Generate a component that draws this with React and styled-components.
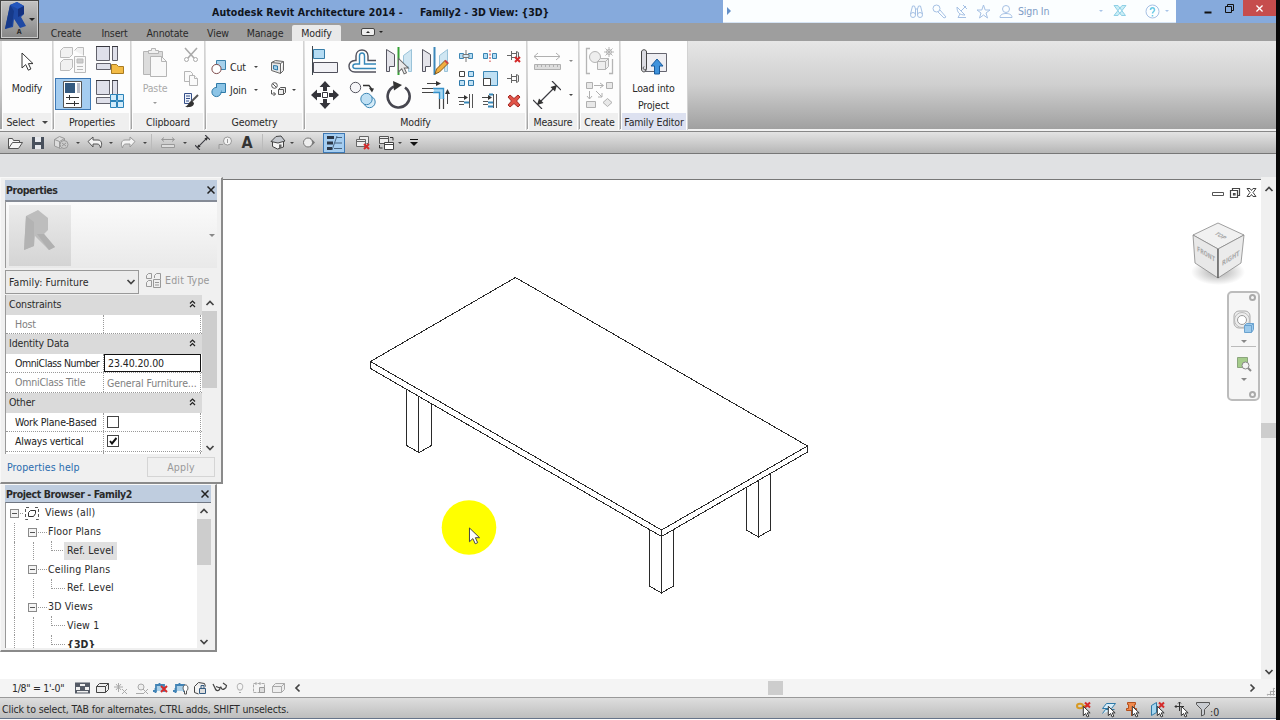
import React from 'react'
import styled, { createGlobalStyle, css } from 'styled-components'

/* ---------- icons ---------- */

const Icon = ({ w = 20, h = 20, children }) => (
    <Svg width={w} height={h} viewBox={`0 0 ${w} ${h}`}>{children}</Svg>
)

const Pointer = ({ x = 0, y = 0, s = 1, fill = '#fff', stroke = '#333' }) => (
    <path
        transform={`translate(${x} ${y}) scale(${s})`}
        d="M.5.5v15l3.7-3.4 2.6 5.6 2.6-1.2-2.5-5.4h4.6z"
        fill={fill}
        stroke={stroke}
        strokeWidth={1 / s}
    />
)

const CrossMark = ({ x, y, s = 8 }) => (
    <path d={`M${x} ${y}l${s} ${s}M${x + s} ${y}l${-s} ${s}`} stroke="#d42a2a" strokeWidth="2" />
)

const RevitLogo = () => (
    <Icon w={24} h={27}>
        <path d="M5 3l7-3 7 4v8l-3 3 5 9-6 2-6-9-1 8-8 2z" fill="#1f49a4" />
        <path d="M5 3L0 27l7-3 2-15z" fill="#173a8a" />
        <path d="M5 3l7-3 7 4-6 3z" fill="#2456bd" />
        <path d="M13 7l6-3v8l-6 3z" fill="#143180" />
    </Icon>
)

const TypeLogo = () => (
    <Icon w={34} h={43}>
        <path d="M4 8L16 2l10 8v12l-4 4 11 13-6 3L13 28l-1 10-10 4z" fill="#bdbdbd" />
        <path d="M4 8L2 42l10-4V14z" fill="#b3b3b3" />
        <path d="M15 26l7 0 11 13-6 3z" fill="#b0b0b0" />
    </Icon>
)

const TypeProps = () => (
    <Icon w={28} h={28}>
        <g fill="#f1f1f1" stroke="#bbb">
            <path d="M1.500 4.500l3-3h9v7l-3 3h-9zM15.500 4.500l3-3h6v8M1.500 16.500l3-3h9v8l-3 3h-9z" />
            <path d="M15.500 10.500h11v16h-11z" fill="#f8f8f8" />
            <path d="M18 13h6v4h-6z" fill="#ccc" />
            <path d="M18 20.500h6M18 23.500h6" />
        </g>
    </Icon>
)

const FamilyTypes = ({ variant }) => (
    <Icon w={30} h={30}>
        <path d="M1.500 1.500h13v14h-13zM17.500 1.500h5v14h-5zM1.500 18.500h14v6h-14z" fill="#dfe0ea" stroke="#62626c" />
        <path d="M1 1.500h14M17 1.500h6" stroke="#38383f" />
        {variant === 'folder' ? (
            <path d="M16.500 19.500h5l2 2h5v7h-12z" fill="#f3bb45" stroke="#a87a20" />
        ) : (
            <path d="M15.500 15.500h6v6h-6zM22.500 15.500h6v6h-6zM15.500 22.500h6v6h-6zM22.500 22.500h6v6h-6z" fill="#d3ecfa" stroke="#2b83b9" />
        )}
    </Icon>
)

const PropertiesSheet = () => (
    <Icon w={22} h={29}>
        <path d="M1.500 1.500h18v26h-18z" fill="#fff" stroke="#555" />
        <path d="M3 3h10v10H3z" fill="#33597f" />
        <path d="M15 3h3v10h-3z" fill="#b9bcc6" />
        <path d="M4 17.500h13M4 23.500h13M7.500 15v5M12.500 21v5" stroke="#333" />
    </Icon>
)

const Paste = () => (
    <Icon w={26} h={30}>
        <g stroke="#b5b5b5">
            <path d="M1.500 3.500h19v23h-19z" fill="#dcdcdc" />
            <path d="M6.500 5.500v-3h3v-2h4v2h3v3z" fill="#f0f0f0" />
            <path d="M8.500 8.500h11l5 5v15h-16z" fill="#f8f8f8" />
            <path d="M19.500 8.500v5h5" fill="none" />
        </g>
    </Icon>
)

const Scissors = () => (
    <Icon w={16} h={16}>
        <g fill="none" stroke="#aaa">
            <path d="M2 1l9 10M14 1L5 11" strokeWidth="1.600" />
            <circle cx="3.500" cy="12.500" r="2" /><circle cx="12.500" cy="12.500" r="2" />
        </g>
    </Icon>
)

const CopyPages = () => (
    <Icon w={16} h={16}>
        <g fill="#fafafa" stroke="#b5b5b5">
            <path d="M1.500 1.500h6l2 2v8h-8z" /><path d="M6.500 5.500h5l3 3v7h-8z" /><path d="M11.500 5.500v3h3" />
        </g>
    </Icon>
)

const MatchType = () => (
    <Icon w={16} h={16}>
        <path d="M1.500 1.500h7v10h-7z" fill="#eef3fa" stroke="#36508a" />
        <path d="M3 4h4M3 6.500h4M3 9h3" stroke="#36508a" />
        <path d="M15 3L8 10" stroke="#555" strokeWidth="2" />
        <path d="M9 9c-3 0-3 4-7 6 4 .5 9 0 9-4z" fill="#333" />
    </Icon>
)

const Cut = () => (
    <Icon w={16} h={16}>
        <path d="M5.500 1.500h9v9h-9z" fill="#a6d1ec" stroke="#3c83ad" />
        <circle cx="5.500" cy="10" r="4.600" fill="#fff" stroke="#7d4a4a" />
    </Icon>
)

const Join = () => (
    <Icon w={16} h={16}>
        <path d="M5.500 1.500h9v9h-9z" fill="#8cc4e6" stroke="#2f7aa8" />
        <circle cx="5.500" cy="10" r="4.600" fill="#8cc4e6" stroke="#2f7aa8" />
        <path d="M6 5h4v5H6z" fill="#8cc4e6" />
    </Icon>
)

const SplitFace = () => (
    <Icon w={15} h={16}>
        <path d="M1.500 3.500l9 1v10l-9-3zM1.500 3.500l4-2 8 1-3 2M13.500 2.500v9l-3 3" fill="#e8e8e8" stroke="#666" />
        <path d="M3.500 6.500l4 .5v4l-4-1z" fill="#a6d1ec" stroke="#2f7aa8" />
    </Icon>
)

const Demolish = () => (
    <Icon w={16} h={15}>
        <g fill="none" stroke="#555">
            <circle cx="4.500" cy="3.500" r="2.800" /><path d="M3 2l3 3M1.500 8v4h4m-2-2l2 2-2 2" />
            <path d="M8.500 7.500l2-2h5v5l-2 2h-5zM8.500 7.500h5v5" fill="#eee" />
        </g>
    </Icon>
)

const Align = () => (
    <Icon w={28} h={29}>
        <path d="M1.500 0v29" stroke="#3f464d" />
        <path d="M2.500 3.500h11v9h-11z" fill="#b5dcf4" stroke="#377da8" />
        <path d="M2.500 16.500h24v10h-24z" fill="#f2f2f6" stroke="#51515c" />
    </Icon>
)

const Offset = () => (
    <Icon w={30} h={26}>
        <g fill="none">
            <path d="M28 12.500h-8V8c0-8-12-8-12 0v4.500H7c-8 0-8 11.500 0 11.500h21" stroke="#51515c" strokeWidth="1.400" />
            <path d="M28 16h-11.500V8c0-4-5-4-5 0v8H7.500c-3.500 0-3.500 4.500 0 4.500h20.500" stroke="#3688b9" strokeWidth="1.400" />
        </g>
    </Icon>
)

const MirrorPick = () => (
    <Icon w={28} h={28}>
        <path d="M1.500 2.500l8 5v12h-5v5h-3z" fill="#e4e4ea" stroke="#555560" />
        <path d="M26.500 2.500l-8 6v11h5v5h3z" fill="#cfe6f2" stroke="#9ac3d9" />
        <path d="M13.500 0v28" stroke="#35a135" strokeWidth="2" />
        <Pointer x={13} y={11} s={0.9} fill="#e9e9e9" stroke="#666" />
    </Icon>
)

const MirrorDraw = () => (
    <Icon w={28} h={28}>
        <path d="M1.500 2.500l8 5v12h-5v5h-3z" fill="#e4e4ea" stroke="#555560" />
        <path d="M26.500 2.500l-8 6v11h5v5h3z" fill="#cfe6f2" stroke="#9ac3d9" />
        <path d="M13.500 0v28" stroke="#3d88bb" strokeWidth="2" />
        <path d="M14 27l1.500-5L24 13.500l3 3-8.500 8.500z" fill="#f2ae3e" stroke="#80591c" />
        <path d="M24 13.500l3 3" stroke="#c44" strokeWidth="2" />
    </Icon>
)

const Move = () => (
    <Icon w={28} h={28}>
        <g fill="#35353b">
            <path d="M14 0l5.500 6H16v4h-4V6H8.500zM14 28l5.500-6H16v-4h-4v4H8.500zM0 14l6-5.500V12h4v4H6v3.500zM28 14l-6-5.500V12h-4v4h4v3.500z" />
        </g>
        <path d="M11.500 11.500h5v5h-5z" fill="#fff" stroke="#35353b" />
    </Icon>
)

const CopyShape = () => (
    <Icon w={28} h={28}>
        <circle cx="6.500" cy="6.500" r="5.200" fill="#f5f5f8" stroke="#55555f" />
        <path d="M14 4.500h6l3 4" fill="none" stroke="#333" strokeWidth="1.300" />
        <path d="M20 7l5 .5-2 4z" fill="#333" />
        <circle cx="20.500" cy="21" r="5.700" fill="#d5ecf9" stroke="#3c86b4" />
        <circle cx="17.500" cy="18" r="5.700" fill="#bfe0f4" stroke="#3c86b4" />
    </Icon>
)

const Rotate = () => (
    <Icon w={27} h={28}>
        <path d="M9 5.500a11 11 0 1 0 11 1" fill="none" stroke="#46464f" strokeWidth="2.600" />
        <path d="M8 0l9 4-8 5.500z" fill="#333" />
    </Icon>
)

const Trim = () => (
    <Icon w={29} h={28}>
        <path d="M1 7.500h12M1 11.500h12M6 2.500h13M18.500 17v11M22.500 17v11" stroke="#444" strokeWidth="1.200" />
        <path d="M15 0l5 2.500L15 5zM24 13l2.500-5 2.500 5z" fill="#333" />
        <path d="M26.500 12v11" stroke="#444" />
        <path d="M13 9.500h7.500V18" stroke="#a7d7f2" strokeWidth="3" fill="none" />
        <path d="M12 7.500h10.500V18M12 11.500h6.500V18" stroke="#3691c9" strokeWidth="1.400" fill="none" />
    </Icon>
)

const SplitElement = ({ gap }) => (
    <Icon w={16} h={14}>
        <path d="M1.500 4.500h4v5h-4zM10.500 4.500h4v5h-4z" fill="#b5dcf4" stroke="#3c86b4" />
        {gap ? (
            <path d="M8 1v12" stroke="#c33" strokeDasharray="2 1.500" />
        ) : (
            <path d="M5 5.500h6v3H5zM8 1v4M8 9v4" fill="#d5ecf9" stroke="#777" />
        )}
    </Icon>
)

const ArrayTool = () => (
    <Icon w={17} h={17}>
        <path d="M1.500 1.500h5v5h-5z" fill="#fff" stroke="#444" />
        <path d="M10.500 1.500h5v5h-5zM1.500 10.500h5v5h-5zM10.500 10.500h5v5h-5z" fill="#c2e2f5" stroke="#2e7aab" />
    </Icon>
)

const Scale = () => (
    <Icon w={17} h={17}>
        <path d="M1.500 1.500h14v14h-14z" fill="#bfe0f4" stroke="#3c86b4" />
        <path d="M1.500 8.500h7v7h-7z" fill="#fff" stroke="#444" />
    </Icon>
)

const Pin = ({ off }) => (
    <Icon w={16} h={16}>
        <path d="M1 7.500h4M5.500 3v9M6 5.500h4M6 9.500h4M10.500 3.500l2 1v6l-2 1z" stroke="#666" fill="#eee" />
        {off && <CrossMark x={9} y={9} s={5} />}
    </Icon>
)

const ExtendSingle = ({ multi }) => (
    <Icon w={16} h={16}>
        <path d="M14.500 1v14M11.500 1v14" stroke="#555" />
        <path d="M0 4.500h7" stroke="#444" /><path d="M6 2l4 2.500L6 7z" fill="#333" />
        <path d="M6 9.500h5" stroke="#3688b9" strokeWidth="2" />
        {multi && <path d="M6 13.500h5M7 1.500h4" stroke="#3688b9" strokeWidth="2" />}
        <path d="M1 8.500h5M1 11.500h5" stroke="#555" />
    </Icon>
)

const Delete = () => (
    <Icon w={14} h={14}>
        <path d="M1 3l2-2 4 3.500L11 1l2 2-3.500 4 3.500 4-2 2-4-3.500L3 13l-2-2 3.500-4z" fill="#e05347" stroke="#a52a24" />
    </Icon>
)

const Measure = ({ small }) => (
    <Icon w={small ? 16 : 28} h={small ? 14 : 18}>
        {small ? (
            <g stroke="#999" fill="#ddd">
                <path d="M2 3.500h12M4 1.500L1.500 3.500 4 5.500M12 1.500l2.500 2L12 5.500" fill="none" /><path d="M1.500 8.500h13v3h-13z" />
            </g>
        ) : (
            <g stroke="#b0b0b0">
                <path d="M1 4.500h26M5 1L1 4.500 5 8M23 1l4 3.500L23 8" fill="none" />
                <path d="M1.500 12.500h26v5h-26z" fill="#ddd" />
                <path d="M4.500 13v2M8.500 13v2M12.500 13v2M16.500 13v2M20.500 13v2M24.500 13v2" />
            </g>
        )}
    </Icon>
)

const Dimension = ({ s = 28 }) => (
    <Svg width={s} height={s} viewBox="0 0 28 28">
        <path d="M5 23L23 5M0 19l9 9M19 0l9 9" stroke="#3b3b42" strokeWidth={s < 20 ? 2 : 1.2} />
        <path d="M4 24l2-6.500 4.500 4.500zM24 4l-6.500 2 4.500 4.500z" fill="#333" />
    </Svg>
)

const CreateGroup = () => (
    <Icon w={29} h={28}>
        <g stroke="#b5b5b5" fill="none">
            <path d="M5 1.500H1.500v25H5M24 26.500h3.500V12" strokeWidth="1.300" />
            <circle cx="10" cy="10" r="5.500" fill="#eee" />
            <path d="M12.500 14.500l3-3h8v8l-3 3h-8zM12.500 14.500h8v8M20.500 14.500l3-3" fill="#efefef" />
            <circle cx="24" cy="5" r="2.500" /><path d="M24 0v10M19 5h10M20.500 1.500l7 7M27.500 1.500l-7 7" />
        </g>
    </Icon>
)

const CreateSimilar = () => (
    <Icon w={29} h={29}>
        <g stroke="#b0b0b0" fill="#e8e8e8">
            <path d="M1.500 2.500h6v6h-6zM21.500 2.500h6v6h-6zM1.500 21.500h9v6h-9zM22.500 18.500l4.500 4-4.500 4-4.500-4z" />
            <path d="M9 5.500h9M15 3l3.500 2.500L15 8M4.500 11v8M2 16l2.500 3L7 16M11 11l6 6M13 17h4v-4" fill="none" />
        </g>
    </Icon>
)

const LoadProject = () => (
    <Icon w={28} h={26}>
        <path d="M5 4.500h21.500v18H5z" fill="#eeeef2" stroke="#666670" />
        <path d="M1.500 3c0-3 5-3 5 0v16c0 5-5 5-5 1z" fill="#dcdce2" stroke="#444" />
        <path d="M4 17.500c-2 2 0 4 2 3" stroke="#444" fill="none" />
        <path d="M17 10l6 7h-3.500v8h-5v-8H11z" fill="#3f93dc" stroke="#195a9c" />
    </Icon>
)

const OpenFolder = () => (
    <Icon w={17} h={14}><path d="M1.500 12.500v-10h4l1 2h6v2M1.500 12.500l4-6h10l-4 6z" fill="#f5f5f5" stroke="#555" /></Icon>
)
const Save = () => (
    <Icon w={14} h={14}><path d="M1 1h12v12H1z" fill="#48505c" /><path d="M4 1h6v5H4zM4 9h6v4H4z" fill="#e6e8ec" /></Icon>
)
const CubeIcon = ({ c = '#999' }) => (
    <Icon w={16} h={15}>
        <path d="M1.500 4.500l5-3 5 2v7l-4 3-6-2.500zM1.500 4.500l5 2v7M6.500 6.500l5-3" fill="#ddd" stroke={c} />
        <circle cx="11" cy="9.500" r="4" fill="#ccc" stroke={c} /><path d="M9 8l4 3M13 8l-4 3" stroke={c} />
    </Icon>
)
const UndoArrow = ({ flip, c = '#555' }) => (
    <Icon w={16} h={13}>
        <path
            transform={flip ? 'translate(16 0) scale(-1 1)' : undefined}
            d="M1 5.500l5-4.500v3h5c4 0 4.500 5 2.500 8-.5-3-1.500-4-3.500-4H6v3z"
            fill="#f4f4f4"
            stroke={c}
        />
    </Icon>
)
const Tag = () => (
    <Icon w={15} h={14}>
        <circle cx="9.500" cy="5" r="4" fill="#f4f4f4" stroke="#999" /><path d="M1 13V8.500h4M9.500 3v4" stroke="#999" fill="none" />
    </Icon>
)
const HomeCube = () => (
    <Icon w={16} h={15}>
        <path d="M2.500 6.500v5l5 2.500 6-2v-5" fill="#f4f4f4" stroke="#444" />
        <path d="M1 6.500L6 1.500l5-.5 4 5-7 2z" fill="#c4c8ce" stroke="#444" /><path d="M9 9.500h2.500v3.500H9z" fill="#666" />
    </Icon>
)
const Section = () => (
    <Icon w={14} h={14}><path d="M8 1.500l5 5-5 5z" fill="#777" /><circle cx="6" cy="6.500" r="4.500" fill="#eee" stroke="#777" /></Icon>
)
const ThinLines = () => (
    <Icon w={17} h={16}>
        <path d="M1 2.500h7M1 8h6M1 13.500h5" stroke="#2b3646" strokeWidth="3" />
        <path d="M10 2.500h6M9 8h7M8 13.500h8M11 1L6 15" stroke="#48627e" />
    </Icon>
)
const CloseHidden = () => (
    <Icon w={16} h={16}>
        <path d="M4.500 4.500v-3h9v7h-2M1.500 4.500h9v7h-9zM1.500 6.500h9" fill="#eee" stroke="#666" /><CrossMark x={9} y={9} s={5} />
    </Icon>
)
const SwitchWindows = () => (
    <Icon w={17} h={16}>
        <path d="M1.500 1.500h9v7h-9zM1.500 3.500h9" fill="#eee" stroke="#555" />
        <path d="M6.500 7.500h9v7h-9zM6.500 9.500h9" fill="#fff" stroke="#444" />
        <path d="M12 2.500h3v3M1.500 10v3h3" stroke="#333" fill="none" />
    </Icon>
)

const Chevron = ({ dir = 'down', c = '#444' }) => {
    const d = {
        down: 'M1.500 3L5 6.500 8.500 3',
        up: 'M1.500 7L5 3.500 8.500 7',
        left: 'M6.500 1.500L3 5l3.500 3.500',
        right: 'M3.500 1.500L7 5 3.500 8.500',
    }[dir]
    return <Icon w={10} h={10}><path d={d} fill="none" stroke={c} strokeWidth="1.700" /></Icon>
}

const DoubleUp = () => (
    <Icon w={7} h={8}><path d="M1 3.500l2.500-2.500 2.500 2.500M1 7l2.500-2.500L6 7" fill="none" stroke="#222" strokeWidth="1.200" /></Icon>
)

const CloseX = ({ s = 8, c = '#222' }) => (
    <Svg width={s} height={s} viewBox="0 0 8 8"><path d="M.5.5l7 7M7.500.5l-7 7" stroke={c} strokeWidth="1.500" /></Svg>
)

/* info center glyphs, thin blue outlines */
const Binoculars = () => (
    <Icon w={15} h={15}><path d="M1.500 10l2-8h2l1 3h2l1-3h2l2 8M6.500 5v6M8.500 5v6" /><circle cx="4" cy="11" r="2.500" /><circle cx="11" cy="11" r="2.500" /></Icon>
)
const Key = () => (
    <Icon w={15} h={15}><circle cx="4.500" cy="4.500" r="3.500" /><path d="M6 8l6 6 2-1-6-7" /></Icon>
)
const Dish = () => (
    <Icon w={13} h={15}><path d="M2 3c0 6 3 8 8 8zM6 7l5-5M3 13.500h8M5 10l-2 3.500M8 1l4 4" /></Icon>
)
const Star = () => (
    <Icon w={15} h={15}><path d="M7.500 1l1.700 5h4.800l-4 3 1.500 5-4-3-4 3L5 9 1 6h4.800z" /></Icon>
)
const User = () => (
    <Icon w={14} h={15}><circle cx="7" cy="5" r="3.500" /><path d="M1 13.500c0-3 3-4 6-4s6 1 6 4z" /></Icon>
)
const Exchange = () => (
    <Icon w={14} h={13}><path d="M1 1.500h4l7.500 10h-4zM13 1.500H9l-8 10h4z" fill="#c9eef6" stroke="#8fd0e6" /></Icon>
)
const Help = () => (
    <Icon w={15} h={15}><circle cx="7.500" cy="7.500" r="6.500" /><path d="M5.500 6c0-3 4-3 4 0 0 1.500-2 1.500-2 3.500M7.500 11v1.500" stroke="#6ccbe6" strokeWidth="1.500" /></Icon>
)

/* view control bar */
const DetailLevel = () => (
    <Icon w={15} h={12}><path d="M0 .5h15v11H0z" fill="#555b66" /><path d="M5 2h5v2H5zM1 5h4v3H1zM10 5h4v3h-4zM2 9h11v1.500H2z" fill="#f0f0f0" /></Icon>
)
const VisualStyle = ({ c = '#444' }) => (
    <Icon w={15} h={12}><path d="M1.500 4.500l3-3h9v6l-3 3h-9zM1.500 4.500h9v6M10.500 4.500l3-3" fill="#eee" stroke={c} /></Icon>
)
const SunPath = () => (
    <Icon w={15} h={13}><path d="M0 5h9M4.500 1v9M2 2l5 6M7 2L2 8M8 7l5 5M13 7l-5 5" stroke="#aaa" /></Icon>
)
const Shadows = () => (
    <Icon w={14} h={13}><circle cx="6" cy="5" r="3" fill="#eee" stroke="#aaa" /><path d="M1 11.500h7M8 7l5 5M13 7l-5 5" stroke="#aaa" /></Icon>
)
const Crop = ({ off }) => (
    <Icon w={16} h={13}>
        <path d="M0 9h3V3h8v7M2.500 6v5M6.500 1v5" fill="none" stroke="#4183b5" strokeWidth="1.800" />
        <path d="M4 4h6v5H4z" fill="#a9cfe8" />
        {off ? <CrossMark x={8} y={4} s={6} /> : <path d="M11.500 12V9c-2-1-2-6 1-6s3 5 1 6v3z" stroke="#555" fill="#fff" />}
    </Icon>
)
const LockedView = () => (
    <Icon w={14} h={14}><path d="M1.500 5.500l4-4 6 1 1 3M1.500 5.500v6l4 1.500" fill="#eee" stroke="#444" /><path d="M6.500 7.500h6v5h-6zM8 7V4.500h3V7" fill="#ddd" stroke="#335a80" /></Icon>
)
const Glasses = () => (
    <Icon w={16} h={12}><path d="M1 2l2 4c1 4 5 3 5-.5 1-1 1 0 1.500 1 1 2 5 0 5-3L11 1M8 6L4 4.500" fill="none" stroke="#444" strokeWidth="1.200" /></Icon>
)
const Bulb = () => (
    <Icon w={8} h={12}><path d="M2.500 8C.5 5 1 1.500 4 1.500S7.500 5 5.500 8zM3 10.500h2" fill="#f5f5f5" stroke="#aaa" /></Icon>
)
const GrayBox = () => (
    <Icon w={14} h={13}><path d="M1.500 1.500h11v9h-11zM4 0v3M8 0v3" fill="none" stroke="#aaa" strokeDasharray="3 1" /><path d="M7.500 5.500h5v5h-5z" fill="#ddd" stroke="#999" /></Icon>
)

/* status bar selection toggles */
const PickIcon = ({ kind }) => (
    <Icon w={17} h={17}>
        {kind === 'link' && <path d="M1 5c0-3 6-3 6 0s-6 3-6 0zM6 5h6" fill="none" stroke="#d79a25" strokeWidth="2" />}
        {kind === 'under' && <path d="M1.500 7.500l4-5h9l-4 5zM1.500 12.500l3-4h9" fill="#d5ecf9" stroke="#2f7aa8" />}
        {kind === 'pin' && <path d="M2.500 1.500h8v2h-1v4h2v2h-10v-2h2v-4h-1zM6.500 10v5" fill="#f0894c" stroke="#b4501e" />}
        {kind === 'face' && <path d="M1.500 4.500l5-3v10l-5 3z" fill="#a6d7f0" stroke="#2f7aa8" />}
        {kind === 'drag' && <path d="M5.500 1v9M1 5.500h9M4 2.500L5.500 1 7 2.500M2.500 4L1 5.500 2.500 7" fill="none" stroke="#333" />}
        {(kind === 'link' || kind === 'face') && <CrossMark x={9} y={1.500} s={5} />}
        <Pointer x={7} y={5} s={0.62} />
    </Icon>
)
const Filter = () => (
    <Icon w={16} h={16}><path d="M1.500 1.500h13v2l-5 5v5l-3 1.500V8.500l-5-5z" fill="#c9ccd1" stroke="#555" /></Icon>
)

const ViewsIcon = () => (
    <Icon w={14} h={13}><path d="M4 .5H.5v12H4M10 .5h3.500v12H10" fill="none" stroke="#555" strokeDasharray="3 2" /><path d="M3.500 5.500l2-2h5v3l-2 3h-5z" fill="#fff" stroke="#333" /></Icon>
)

/* ---------- ribbon ---------- */

const tabs = [
    ['Create', 52], ['Insert', 45], ['Annotate', 61], ['View', 40], ['Manage', 54],
]

const Header = () => (
    <HeaderBar>
        <AppButton>
            <AppLogo><RevitLogo /><b>A</b></AppLogo>
            <Caret $s={3} $c="#222" />
        </AppButton>
        <HeaderRows>
            <TitleBar>
                <Title>Autodesk Revit Architecture 2014 -</Title>
                <Title $doc>Family2 - 3D View: {'{3D}'}</Title>
                <InfoCenter>
                    <PlayMark />
                    <InfoIcons>
                        <Binoculars /><Key /><Dish /><Star /><User />
                    </InfoIcons>
                    <SignIn>Sign In</SignIn>
                    <Caret $s={2} $c="#a8c4e8" />
                    <InfoIcons $last><Exchange /><Help /></InfoIcons>
                    <Caret $s={2} $c="#a8c4e8" />
                </InfoCenter>
                <WindowButtons>
                    <Icon w={10} h={10}><path d="M1.500 8.500h7" stroke="#111" strokeWidth="2" /></Icon>
                    <Icon w={10} h={11}><path d="M1.500 3.500h6v6h-6zM3.500 3V1.500h6v6H8" fill="none" stroke="#111" /></Icon>
                </WindowButtons>
                <CloseButton><CloseX s={7} c="#fff" /></CloseButton>
            </TitleBar>
            <TabRow>
                {tabs.map(([name, w]) => <Tab key={name} $w={w}>{name}</Tab>)}
                <Tab $w={49} $active>Modify</Tab>
                <RibbonToggle><i /></RibbonToggle>
                <Caret $s={2} $c="#222" />
            </TabRow>
        </HeaderRows>
    </HeaderBar>
)

const Ribbon = () => (
    <RibbonBar>
        <Panel $w={51}>
            <PanelBody>
                <BigButton $w={51} $top={9}>
                    <Icon w={13} h={20}><Pointer x={0.5} y={0.5} /></Icon>
                    <span>Modify</span>
                </BigButton>
            </PanelBody>
            <PanelName $gap={7}>Select <Caret $s={3} /></PanelName>
        </Panel>
        <Panel $w={77}>
            <PanelBody>
                <Grid $cols="37px 37px" $rows="34px 34px">
                    <TypeProps />
                    <FamilyTypes variant="folder" />
                    <Selected $w={36} $h={32}><PropertiesSheet /></Selected>
                    <FamilyTypes />
                </Grid>
            </PanelBody>
            <PanelName>Properties</PanelName>
        </Panel>
        <Panel $w={73}>
            <PanelBody>
                <BigButton $w={46} $off $top={5}>
                    <Paste />
                    <span>Paste</span>
                    <Caret $s={2} $c="#999" />
                </BigButton>
                <Grid $cols="26px" $rows="24px 21px 24px"><Scissors /><CopyPages /><MatchType /></Grid>
            </PanelBody>
            <PanelName>Clipboard</PanelName>
        </Panel>
        <Panel $w={98}>
            <PanelBody>
                <ToolList>
                    <ToolRow><Cut /><span>Cut</span><Caret $s={2} /><SplitFace /></ToolRow>
                    <ToolRow><Join /><span>Join</span><Caret $s={2} /><Demolish /><Caret $s={2} /></ToolRow>
                </ToolList>
            </PanelBody>
            <PanelName>Geometry</PanelName>
        </Panel>
        <Panel $w={222}>
            <PanelBody>
                <Grid $cols="40px 35px 37px 36px" $rows="35px 33px">
                    <Align /><Offset /><MirrorPick /><MirrorDraw />
                    <Move /><CopyShape /><Rotate /><Trim />
                </Grid>
                <Grid $cols="26px 22px 26px" $rows="25px 21px 23px">
                    <SplitElement /><SplitElement gap /><Pin off />
                    <ArrayTool /><Scale /><Pin />
                    <ExtendSingle /><ExtendSingle multi /><Delete />
                </Grid>
            </PanelBody>
            <PanelName>Modify</PanelName>
        </Panel>
        <Panel $w={51}>
            <PanelBody>
                <Grid $cols="38px 9px" $rows="35px 33px">
                    <Measure /><Caret $s={2} $c="#888" />
                    <Dimension /><Caret $s={2} />
                </Grid>
            </PanelBody>
            <PanelName>Measure</PanelName>
        </Panel>
        <Panel $w={40}>
            <PanelBody>
                <Grid $cols="39px" $rows="35px 33px"><CreateGroup /><CreateSimilar /></Grid>
            </PanelBody>
            <PanelName>Create</PanelName>
        </Panel>
        <Panel $w={67}>
            <PanelBody>
                <BigButton $w={65} $top={6}>
                    <LoadProject />
                    <span>Load into<br />Project</span>
                </BigButton>
            </PanelBody>
            <PanelName $blue>Family Editor</PanelName>
        </Panel>
    </RibbonBar>
)

const QuickAccess = () => (
    <QuickBar>
        <Slot $w={31}><OpenFolder /></Slot>
        <Slot $w={14}><Save /></Slot>
        <Slot $w={31}><CubeIcon /></Slot>
        <Slot $w={4}><Caret $s={2} /></Slot>
        <Slot $w={29}><UndoArrow /></Slot>
        <Slot $w={4}><Caret $s={2} /></Slot>
        <Slot $w={29}><UndoArrow flip c="#999" /></Slot>
        <Slot $w={6}><Caret $s={2} /></Slot>
        <Divider />
        <Slot $w={26}><Measure small /></Slot>
        <Slot $w={8}><Caret $s={2} /></Slot>
        <Slot $w={27}><Dimension s={15} /></Slot>
        <Slot $w={19}><Tag /></Slot>
        <Slot $w={24}><LetterA>A</LetterA></Slot>
        <Divider />
        <Slot $w={23}><HomeCube /></Slot>
        <Slot $w={6}><Caret $s={2} /></Slot>
        <Slot $w={28}><Section /></Slot>
        <Selected $w={22} $h={20}><ThinLines /></Selected>
        <Slot $w={36}><CloseHidden /></Slot>
        <Slot $w={10}><SwitchWindows /></Slot>
        <Slot $w={18}><Caret $s={2} /></Slot>
        <Slot $w={10}><Customize><Caret $c="#111" $s={4} /></Customize></Slot>
    </QuickBar>
)

/* ---------- palettes ---------- */

const rows = [
    { group: 'Constraints' },
    { name: 'Host', off: true },
    { group: 'Identity Data' },
    { name: 'OmniClass Number', value: '23.40.20.00', focus: true },
    { name: 'OmniClass Title', value: 'General Furniture...', off: true },
    { group: 'Other' },
    { name: 'Work Plane-Based', check: false },
    { name: 'Always vertical', check: true },
    { name: '' },
]

const Properties = () => (
    <Palette $w={223} $h={307}>
        <PaletteTitle $h={20}>Properties<CloseX /></PaletteTitle>
        <TypeBox>
            <TypeThumb><TypeLogo /></TypeThumb>
            <Caret $s={3} $c="#888" />
        </TypeBox>
        <FamilyRow>
            <Combo>Family: Furniture<Chevron /></Combo>
            <EditType><Icon w={17} h={16}>
                <path d="M1.500 3.500l2-2h3v5h-5zM9.500 6V3.500l2-2h4V7M1.500 10.500l2-2h3v6h-5zM8.500 7.500h7v8h-7zM10 10.500h4M10 13h4" fill="none" stroke="#999" />
            </Icon>Edit Type</EditType>
        </FamilyRow>
        <GridArea>
            <PropRows>
                {rows.map((r, i) => r.group ? (
                    <GroupRow key={i}>{r.group}<DoubleUp /></GroupRow>
                ) : (
                    <PropRow key={i} $off={r.off}>
                        <PropName $tight={r.focus}>{r.name}</PropName>
                        <Value $focus={r.focus}>
                            {r.value}
                            {r.check !== undefined && (
                                <CheckBox>{r.check && <Icon w={8} h={8}><path d="M1 4l2 2.500L7.500 1" fill="none" stroke="#111" strokeWidth="2" /></Icon>}</CheckBox>
                            )}
                        </Value>
                    </PropRow>
                ))}
            </PropRows>
            <ScrollBar $w={15}>
                <Chevron dir="up" />
                <Thumb $top={3} $h={77} />
                <Chevron />
            </ScrollBar>
        </GridArea>
        <PaletteFooter>
            <HelpLink>Properties help</HelpLink>
            <ApplyButton>Apply</ApplyButton>
        </PaletteFooter>
    </Palette>
)

const views = [
    { label: 'Views (all)', level: 0, icon: true },
    { label: 'Floor Plans', level: 1 },
    { label: 'Ref. Level', level: 2, marked: true },
    { label: 'Ceiling Plans', level: 1 },
    { label: 'Ref. Level', level: 2 },
    { label: '3D Views', level: 1 },
    { label: 'View 1', level: 2 },
    { label: '{3D}', level: 2, bold: true },
]

const ProjectBrowser = () => (
    <Palette $w={217} $h={168} $tight>
        <PaletteTitle $h={17}>Project Browser - Family2<CloseX /></PaletteTitle>
        <TreeArea>
            <Tree>
                {views.map((v, i) => (
                    <TreeRow key={i}>
                        {v.level > 0 && <Guide $w={9} />}
                        {v.level > 1 && <Guide $w={19} />}
                        {v.level === 2 ? <Elbow /> : (
                            <TreeBox $first={v.level === 0}><Expander /><Dots $w={v.icon ? 3 : 9} />{v.icon && <ViewsIcon />}</TreeBox>
                        )}
                        <TreeLabel $marked={v.marked} $bold={v.bold} $level={v.level}>{v.label}</TreeLabel>
                    </TreeRow>
                ))}
            </Tree>
            <ScrollBar $w={14}>
                <Chevron dir="up" />
                <Thumb $top={3} $h={46} />
                <Chevron />
            </ScrollBar>
        </TreeArea>
    </Palette>
)

/* ---------- drawing area ---------- */

const TableModel = () => (
    <Model width="1038" height="499" viewBox="223 180 1038 499">
        <g fill="#fff" stroke="#2a2a2a" strokeWidth="1" shapeRendering="crispEdges">
            <path d="M406.500 389v56.500l12.500 7 12.500-7V400zM418.500 392v60" />
            <path d="M649.500 520v66l12 7 12-7v-66zM661.500 530v62" />
            <path d="M746.500 480v50l12 7 12-7v-60zM758.500 475v62" />
            <path d="M515.500 277.500L370.500 361.500v7L661.500 536.500l146-84.500v-6z" />
            <path d="M370.500 361.500l291 168.500 146-84M661.500 530v6" fill="none" />
        </g>
        <circle cx="469" cy="527.500" r="27.300" fill="#ffff00" />
        <Pointer x={469} y={527.5} s={0.92} stroke="#444" />
    </Model>
)

const ViewCube = () => (
    <Svg width="64" height="66" viewBox="0 0 64 66">
        <defs>
            <radialGradient id="cubeShade">
                <stop offset="0" stopColor="#888" stopOpacity=".7" />
                <stop offset="1" stopColor="#888" stopOpacity="0" />
            </radialGradient>
        </defs>
        <ellipse cx="32" cy="52" rx="27" ry="13" fill="url(#cubeShade)" />
        <g stroke="#888" strokeWidth=".8">
            <path d="M7 15L32 3l26 12-26 14z" fill="#f1f1f1" />
            <path d="M7 15l25 14v29L9 43z" fill="#e8e8e8" />
            <path d="M58 15L32 29v29l23-15z" fill="#ebebeb" />
        </g>
        <path d="M32 29v29" stroke="#444" />
        <CubeText transform="matrix(.75 .45 0 1 11 31)">FRONT</CubeText>
        <CubeText transform="matrix(.8 -.5 0 1 36 46)">RIGHT</CubeText>
        <CubeText transform="matrix(.65 .38 -.8 .42 28 14)">TOP</CubeText>
    </Svg>
)

const NavBar = () => (
    <NavBox>
        <NavDot />
        <Icon w={26} h={26}>
            <rect x="3" y="2" width="16" height="17" rx="5" fill="#eee" stroke="#aaa" />
            <circle cx="11" cy="11" r="7.500" fill="none" stroke="#bbb" />
            <circle cx="11" cy="11" r="4.500" fill="#fff" stroke="#999" />
            <path d="M13.500 16.500l2-2h7v6l-2 3h-7z" fill="#9ccaec" stroke="#6aa2cf" />
            <path d="M13.500 16.500h7v7M20.500 16.500l2-2" stroke="#6aa2cf" fill="none" />
        </Icon>
        <Caret $s={3} $c="#888" />
        <NavRule />
        <Icon w={18} h={18}>
            <path d="M2.500 2.500h10v10h-10z" fill="#a5cc8b" stroke="#8ba57d" />
            <circle cx="10.500" cy="10.500" r="3.500" fill="#f4f4f4" stroke="#888" /><path d="M13 13l3 3" stroke="#888" strokeWidth="2" />
        </Icon>
        <Caret $s={3} $c="#888" />
        <NavDot $end />
    </NavBox>
)

const DrawingArea = () => (
    <Canvas>
        <TableModel />
        <MdiButtons>
            <Icon w={12} h={11}><path d="M.5 5.500h11v3H.5z" fill="#fff" stroke="#555" /></Icon>
            <Icon w={12} h={12}><path d="M3.500 3V1.500h7v7H9M1.500 3.500h7v7h-7zM4.500 6.500h1.500v1.500H4.500z" fill="#fff" stroke="#444" strokeWidth="1.200" /></Icon>
            <Icon w={11} h={11}><path d="M1 1.500h3l1.500 2 1.500-2h3l-3 4 3 4H7l-1.500-2-1.500 2H1l3-4z" fill="#fff" stroke="#444" /></Icon>
        </MdiButtons>
        <CubeHolder><ViewCube /></CubeHolder>
        <NavHolder><NavBar /></NavHolder>
    </Canvas>
)

const viewIcons = [
    <DetailLevel />, <VisualStyle />, <SunPath />, <Shadows />, <Crop off />, <Crop />, <LockedView />,
    <Glasses />, <Bulb />, <GrayBox />, <VisualStyle c="#aaa" />, <Chevron dir="left" />,
]

const ViewControls = () => (
    <ViewBar>
        <ScaleText>1/8" = 1'-0"</ScaleText>
        {viewIcons.map((icon, i) => <Slot key={i} $w={19.6}>{icon}</Slot>)}
        <HTrack><HThumb /></HTrack>
        <Chevron dir="right" />
        <Grip />
    </ViewBar>
)

const StatusBar = () => (
    <Status>
        <StatusText>Click to select, TAB for alternates, CTRL adds, SHIFT unselects.</StatusText>
        <Picks>
            {['link', 'under', 'pin', 'face', 'drag'].map(k => <Slot key={k} $w={24.5}><PickIcon kind={k} /></Slot>)}
            <Filter />
        </Picks>
        <PickCount>:0</PickCount>
    </Status>
)

const App = () => (
    <>
        <GlobalStyle />
        <Screen>
            <Frame>
                <Header />
                <Ribbon />
                <QuickAccess />
                <OptionsBar />
                <Workspace>
                    <Dock>
                        <Properties />
                        <ProjectBrowser />
                    </Dock>
                    <DrawingArea />
                    <ScrollBar $w={15} $view>
                        <Chevron dir="up" />
                        <Thumb $top={229} $h={15} />
                        <Chevron />
                    </ScrollBar>
                </Workspace>
                <ViewControls />
                <StatusBar />
            </Frame>
        </Screen>
    </>
)

export default App

/* ---------- styles ---------- */

const GlobalStyle = createGlobalStyle`
    * { box-sizing: border-box; }
    body {
        margin: 0;
        overflow: hidden;
        font-family: "DejaVu Sans Condensed", "DejaVu Sans", sans-serif;
        font-stretch: condensed;
        font-size: 10.5px;
        letter-spacing: -0.15px;
        color: #2a2a2a;
    }
`

const Svg = styled.svg`
    display: block;
    flex: none;
`

const Caret = styled.i`
    flex: none;
    width: 0;
    height: 0;
    border: ${p => p.$s || 4}px solid transparent;
    border-top-color: ${p => p.$c || '#444'};
    border-bottom: 0;
`

const Screen = styled.div`
    width: 1280px;
    height: 720px;
    padding-right: 4px;
    background: #080808;
`

const Frame = styled.div`
    height: 720px;
    display: flex;
    flex-direction: column;
    background: #fff;
`

const HeaderBar = styled.header`
    height: 41px;
    flex: none;
    display: flex;
    background: #9e9e9e;
`

const AppButton = styled.div`
    width: 39px;
    height: 39px;
    display: flex;
    align-items: center;
    padding: 0 2px 1px 4px;
    background: linear-gradient(#c2c2c2, #868686);
    border: 1px solid #444;
    box-shadow: inset 0 0 0 1px #ccc;
`

const AppLogo = styled.div`
    display: flex;
    flex-direction: column;
    align-items: center;
    b { font-size: 7px; line-height: 7px; margin-left: 4px; }
`

const HeaderRows = styled.div`
    flex: 1;
    display: flex;
    flex-direction: column;
`

const TitleBar = styled.div`
    height: 23px;
    display: flex;
    align-items: center;
    padding-left: 173px;
    background: #86aadc;
`

const Title = styled.div`
    width: ${p => (p.$doc ? 303 : 208)}px;
    flex: none;
    font-weight: bold;
    font-size: 10.5px;
    letter-spacing: ${p => (p.$doc ? -0.03 : 0.1)}px;
    white-space: nowrap;
    color: #10151c;
`

const InfoCenter = styled.div`
    width: 453px;
    height: 23px;
    flex: none;
    display: flex;
    align-items: center;
    background: #fbfeff;
    border-bottom: 1px solid #d5e4f5;
`

const PlayMark = styled.i`
    border: 4px solid transparent;
    border-left-color: #6490c8;
    border-right: 0;
    margin-left: 4px;
`

const InfoIcons = styled.div`
    display: flex;
    gap: ${p => (p.$last ? 18 : 8)}px;
    margin-left: ${p => (p.$last ? 10 : 178)}px;
    margin-right: 5px;
    svg { fill: none; stroke: #a6c1e4; }
`

const SignIn = styled.div`
    width: 81px;
    color: #7e9cc6;
`

const WindowButtons = styled.div`
    width: 67px;
    height: 17px;
    flex: none;
    display: flex;
    align-items: center;
    gap: 11px;
    padding-left: 27px;
    align-self: flex-start;
`

const CloseButton = styled.div`
    width: 33px;
    height: 16px;
    flex: none;
    display: flex;
    align-items: center;
    justify-content: center;
    align-self: flex-start;
    background: #c64d4d;
`

const TabRow = styled.nav`
    height: 18px;
    display: flex;
    align-items: center;
    padding-left: 1px;
`

const Tab = styled.div`
    width: ${p => p.$w}px;
    height: 16px;
    line-height: 17px;
    align-self: flex-end;
    text-align: center;
    white-space: nowrap;
    ${p => p.$active && css`
        background: #e9e9e9;
        border-radius: 2px 2px 0 0;
    `}
`

const RibbonToggle = styled.div`
    width: 14px;
    height: 8px;
    display: flex;
    align-items: center;
    justify-content: center;
    margin: 0 4px 0 20px;
    background: #eee;
    border: 1px solid #444;
    border-radius: 2px;
    i { border: 2px solid transparent; border-bottom-color: #222; border-top: 0; }
`

const RibbonBar = styled.section`
    height: 91px;
    flex: none;
    display: flex;
    gap: 1px;
    padding: 0 0 1px 2px;
    background: linear-gradient(#e6e6e6, #cfcfcf 50%, #a0a0a0) 0 0 / 100% 88px no-repeat #f2f2f2;
    border-bottom: 1px solid #888;
`

const Panel = styled.div`
    width: ${p => p.$w}px;
    display: flex;
    flex-direction: column;
    background: #fdfdfd;
    border-right: 1px solid #d2d2d2;
`

const PanelBody = styled.div`
    height: 72px;
    display: flex;
    padding-top: 2px;
`

const PanelName = styled.div`
    height: 17px;
    margin: 0 1px;
    padding-top: 1px;
    display: flex;
    align-items: center;
    justify-content: center;
    gap: ${p => p.$gap || 0}px;
    white-space: nowrap;
    background: ${p => (p.$blue ? '#dde1f0' : '#efefef')};
`

const BigButton = styled.div`
    width: ${p => p.$w}px;
    display: flex;
    flex-direction: column;
    align-items: center;
    padding-top: ${p => p.$top}px;
    color: ${p => (p.$off ? '#aaa' : '#2a2a2a')};
    span {
        line-height: 17px;
        text-align: center;
        margin: ${p => (p.$off ? '2px 0 5px' : '5px 0 0')};
    }
    ${Svg} + span { margin-top: ${p => (p.$top === 9 ? 8 : p.$off ? 2 : 5)}px; }
`

const Grid = styled.div`
    display: grid;
    grid-template-columns: ${p => p.$cols};
    grid-template-rows: ${p => p.$rows};
    place-items: center;
`

const Selected = styled.div`
    width: ${p => p.$w}px;
    height: ${p => p.$h}px;
    flex: none;
    display: flex;
    align-items: center;
    justify-content: center;
    background: #a5cdf0;
    border: 1px solid #3d78b4;
`

const ToolList = styled.div`
    padding: 12px 0 0 5px;
`

const ToolRow = styled.div`
    height: 23px;
    display: flex;
    align-items: center;
    span { width: 22px; margin: 0 2px 0 3px; }
    ${Caret} { margin-right: 12px; }
    svg + ${Caret} { margin-left: 6px; margin-right: 0; }
`

const QuickBar = styled.div`
    height: 22px;
    flex: none;
    display: flex;
    align-items: center;
    background: linear-gradient(#e4e4e4, #b6b6b6);
    border-bottom: 1px solid #777;
`

const Slot = styled.div`
    width: ${p => p.$w}px;
    flex: none;
    display: flex;
    align-items: center;
    justify-content: center;
`

const Divider = styled.i`
    width: 1px;
    height: 18px;
    margin: 0 3px;
    background: #bbb;
`

const LetterA = styled.b`
    font-size: 16px;
    line-height: 16px;
    color: #333;
`

const Customize = styled.div`
    display: flex;
    padding-top: 2px;
    border-top: 1px solid #111;
`

const OptionsBar = styled.div`
    height: 23px;
    flex: none;
    background: #e0e1e3;
`

const Workspace = styled.main`
    height: 502px;
    flex: none;
    display: flex;
`

const Dock = styled.aside`
    width: 223px;
    flex: none;
`

const Palette = styled.section`
    width: ${p => p.$w}px;
    height: ${p => p.$h}px;
    display: flex;
    flex-direction: column;
    padding: ${p => (p.$tight ? '0 4px 2px' : '2px 4px 3px')};
    background: #f0f0f0;
    border: 1px solid #f8f8f8;
    border-right: 2px solid #8a8a8a;
    border-bottom: 2px solid #8a8a8a;
`

const PaletteTitle = styled.h2`
    height: ${p => p.$h}px;
    flex: none;
    margin: 0;
    padding: 0 2px 0 1px;
    display: flex;
    align-items: center;
    justify-content: space-between;
    font-size: 10.5px;
    letter-spacing: -0.43px;
    background: #bfcddf;
`

const TypeBox = styled.div`
    height: 68px;
    flex: none;
    display: flex;
    align-items: center;
    justify-content: space-between;
    padding: 0 2px 0 3px;
    background: linear-gradient(#fbfbfb, #e9e9e9);
    border-top: 2px solid #858b96;
    border-left: 1px solid #999;
`

const TypeThumb = styled.div`
    width: 62px;
    height: 61px;
    padding: 3px 0 0 13px;
    background: linear-gradient(#ebebeb, #d4d4d4);
`

const FamilyRow = styled.div`
    height: 27px;
    flex: none;
    display: flex;
    align-items: center;
`

const Combo = styled.div`
    width: 134px;
    height: 24px;
    display: flex;
    align-items: center;
    justify-content: space-between;
    padding: 0 2px 0 3px;
    letter-spacing: 0.1px;
    background: #ececec;
    border: 1px solid #999;
`

const EditType = styled.div`
    display: flex;
    align-items: center;
    gap: 3px;
    margin: -3px 0 0 6px;
    letter-spacing: 0.2px;
    color: #999;
`

const GridArea = styled.div`
    height: 159px;
    flex: none;
    display: flex;
    overflow: hidden;
    border-left: 1px solid #999;
`

const PropRows = styled.div`
    width: 196px;
    flex: none;
    background: #fff;
`

const GroupRow = styled.div`
    height: 19.6px;
    display: flex;
    align-items: center;
    justify-content: space-between;
    padding: 0 6px 2px 3px;
    background: #dadada;
`

const PropRow = styled.div`
    height: 19.6px;
    display: flex;
    align-items: stretch;
    line-height: 18px;
    white-space: nowrap;
    color: ${p => (p.$off ? '#808080' : '#222')};
    border-bottom: 1px dotted #999;
`

const PropName = styled.span`
    width: 98px;
    padding-left: 9px;
    letter-spacing: ${p => (p.$tight ? -0.42 : -0.2)}px;
    border-right: 1px dotted #999;
`

const Value = styled.div`
    width: 97px;
    display: flex;
    align-items: center;
    padding-left: 3px;
    letter-spacing: -0.1px;
    border-right: 1px dotted #999;
    ${p => p.$focus && css`border: 1px solid #111;`}
`

const CheckBox = styled.i`
    width: 12px;
    height: 12px;
    display: flex;
    align-items: center;
    justify-content: center;
    border: 1px solid #444;
    background: #fff;
`

const ScrollBar = styled.div`
    width: ${p => p.$w}px;
    flex: none;
    display: flex;
    flex-direction: column;
    align-items: center;
    padding: ${p => (p.$view ? '7px 0 2px' : '3px 0 1px')};
    background: #f0f0f0;
    & > svg:last-child { margin-top: auto; }
`

const Thumb = styled.i`
    width: 100%;
    height: ${p => p.$h}px;
    margin-top: ${p => p.$top}px;
    background: #cdcdcd;
`

const PaletteFooter = styled.div`
    height: 25px;
    display: flex;
    align-items: center;
    justify-content: space-between;
    padding: 0 2px;
`

const HelpLink = styled.a`
    color: #2a6cae;
    letter-spacing: 0.1px;
`

const ApplyButton = styled.div`
    width: 68px;
    height: 20px;
    line-height: 18px;
    text-align: center;
    letter-spacing: 0.2px;
    color: #999;
    border: 1px solid #d5d5d5;
`

const TreeArea = styled.div`
    height: 146px;
    display: flex;
    overflow: hidden;
    background: #fff;
    border-top: 1px solid #6f7682;
    border-left: 1px solid #999;
`

const Tree = styled.div`
    flex: 1;
    padding-top: 1px;
`

const TreeRow = styled.div`
    height: 18.75px;
    display: flex;
    align-items: center;
`

const Guide = styled.i`
    width: ${p => p.$w}px;
    height: 100%;
    border-right: 1px dotted #999;
`

const TreeBox = styled.div`
    display: flex;
    align-items: center;
    margin-left: ${p => (p.$first ? 4 : 13)}px;
`

const Expander = styled.i`
    width: 9px;
    height: 9px;
    background: linear-gradient(#555, #555) center / 5px 1px no-repeat #f4f4f4;
    border: 1px solid #8a8a8a;
`

const Dots = styled.i`
    width: ${p => p.$w}px;
    border-top: 1px dotted #999;
    margin: 0 2px 0 1px;
`

const Elbow = styled.i`
    width: 14px;
    height: 10px;
    margin: -9px 0 0 17px;
    border: 1px dotted #999;
    border-width: 0 0 1px 1px;
`

const labelShift = [3, -4, -1]

const TreeLabel = styled.span`
    height: 18px;
    line-height: 17px;
    padding: 0 3px;
    margin-left: ${p => labelShift[p.$level]}px;
    letter-spacing: 0.15px;
    font-weight: ${p => (p.$bold ? 'bold' : 'normal')};
    background: ${p => (p.$marked ? '#e0e0e0' : 'none')};
`

const Canvas = styled.div`
    width: 1038px;
    flex: none;
    position: relative;
    background: #fff;
    border-top: 2px solid #e0e1e3;
    box-shadow: inset 0 1px 0 #777;
`

const Model = styled(Svg)`
    margin-top: 1px;
`

const MdiButtons = styled.div`
    position: absolute;
    top: 8px;
    right: 4px;
    display: flex;
    gap: 5px;
`

const CubeHolder = styled.div`
    position: absolute;
    top: 41px;
    right: 11px;
`

const CubeText = styled.text`
    font: bold 7px "DejaVu Sans Condensed", sans-serif;
    letter-spacing: 0;
    fill: #aaa;
`

const NavHolder = styled.div`
    position: absolute;
    top: 112px;
    right: 1px;
`

const NavBox = styled.div`
    width: 33px;
    height: 110px;
    display: flex;
    flex-direction: column;
    align-items: center;
    padding: 1px 2px;
    background: #f6f6f6;
    border: 2px solid #bcbcbc;
    border-radius: 5px;
    & > svg { margin: 8px 0 5px; }
`

const NavDot = styled.i`
    width: 7px;
    height: 7px;
    flex: none;
    align-self: flex-end;
    margin-top: ${p => (p.$end ? 'auto' : 0)};
    border: 2px solid #aaa;
    border-radius: 50%;
`

const NavRule = styled.i`
    width: 25px;
    height: 1px;
    flex: none;
    margin-top: 3px;
    background: #bbb;
`

const ViewBar = styled.div`
    height: 18px;
    flex: none;
    display: flex;
    align-items: center;
    padding-left: 12px;
    background: #f4f4f4;
`

const ScaleText = styled.div`
    width: 61px;
    flex: none;
    white-space: nowrap;
    letter-spacing: -0.3px;
`

const HTrack = styled.div`
    flex: 1;
    padding-left: 460px;
`

const HThumb = styled.div`
    width: 15px;
    height: 14px;
    background: #cdcdcd;
`

const Grip = styled.i`
    width: 9px;
    height: 9px;
    margin: 6px 1px 0 9px;
    background: radial-gradient(#aaa 1px, transparent 1.2px) 0 0 / 3px 3px;
    clip-path: polygon(100% 0, 100% 100%, 0 100%);
`

const Status = styled.footer`
    height: 22px;
    flex: none;
    display: flex;
    align-items: center;
    justify-content: space-between;
    padding: 2px 57px 0 2px;
    background: linear-gradient(#dedede, #bebebe);
    border-top: 1px solid #999;
    border-bottom: 1px solid #66748a;
`

const StatusText = styled.div`
    flex: 1;
    white-space: nowrap;
`

const Picks = styled.div`
    display: flex;
    align-items: center;
    margin-right: -1px;
`

const PickCount = styled.span`
    padding-top: 5px;
`
